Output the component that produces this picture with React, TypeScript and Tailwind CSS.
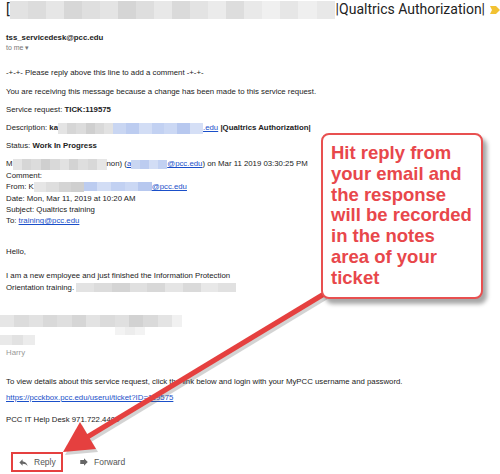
import React from "react";

// pixelated "redaction" strip: equal cells, each with its own shade
function Mosaic({ cells, className = "" }: { cells: string[]; className?: string }) {
  return (
    <span className={"inline-flex align-middle " + className}>
      {cells.map((c, i) => (
        <span key={i} className="h-full flex-1" style={{ background: c }} />
      ))}
    </span>
  );
}

const G1 = ["#e4e4e4", "#d6d6d6", "#dcdcdc", "#cfcfcf", "#d9d9d9", "#e2e2e2", "#d3d3d3", "#dedede", "#d8d8d8", "#e6e6e6"];
const BL = ["#c9d6f2", "#bcccf0", "#d2ddf5", "#c2d1f2", "#cbd8f4", "#b7c8ef", "#d5dff6"];

function ReplyIcon() {
  return (
    <svg viewBox="0 0 24 24" className="h-[11px] w-[11px]" fill="#666">
      <path d="M10 9V5l-7 7 7 7v-4.1c5 0 8.5 1.6 11 5.1-1-5-4-10-11-11z" />
    </svg>
  );
}

function ForwardIcon() {
  return (
    <svg viewBox="0 0 24 24" className="h-[10px] w-[10px]" fill="#666">
      <path d="M12 7V3l9 9-9 9v-4H3V7z" />
    </svg>
  );
}

const A = "text-[#1a4fc9] underline";

export default function App() {
  return (
    <div className="relative h-[474px] w-[500px] overflow-hidden bg-white font-['Liberation_Sans',Arial,sans-serif] text-[7.8px] leading-[11.4px] text-[#222]">
      {/* subject line */}
      <div className="flex h-[18px] items-center pl-[6px] pt-[2px] font-['Roboto',Arial,sans-serif] text-[14px] text-[#222]">
        <span>[</span>
        <Mosaic
          className="h-[18px] w-[326px]"
          cells={["#e2e2e2", "#dcdcdc", "#e6e6e6", "#d7d7d7", "#dfdfdf", "#e4e4e4", "#d5d5d5", "#dedede", "#e8e8e8", "#dadada", "#e3e3e3", "#ebebeb", "#dddddd", "#e9e9e9", "#f0f0f0", "#e6e6e6", "#efefef", "#e8e8e8"]}
        />
        <span className="ml-[1px] whitespace-nowrap">|Qualtrics Authorization|</span>
        <svg viewBox="0 0 10 8" className="ml-[5px] h-[8px] w-[10px]">
          <polygon points="0,0 6,0 10,4 6,8 0,8 2,4" fill="#f2c233" />
        </svg>
      </div>

      <div className="px-[6px]">
        <div className="mt-[14px] font-bold">tss_servicedesk@pcc.edu</div>
        <div className="text-[7px] leading-[10px] text-[#777]">to me ▾</div>

        <div className="mt-[14px]">-+-+- Please reply above this line to add a comment -+-+-</div>
        <div className="mt-[7.6px]">You are receiving this message because a change has been made to this service request.</div>
        <div className="mt-[6.6px]">
          Service request: <b>TICK:119575</b>
        </div>
        <div className="mt-[6.6px] flex items-center whitespace-nowrap">
          Description:&nbsp;<b>ka</b>
          <Mosaic className="h-[11px] w-[55px]" cells={G1.slice(0, 6)} />
          <Mosaic className="h-[11px] w-[90px]" cells={BL} />
          <span className={A}>.edu</span>
          <b>&nbsp;|Qualtrics Authorization|</b>
        </div>
        <div className="mt-[6.6px]">
          Status: <b>Work In Progress</b>
        </div>

        <div className="mt-[6.6px]">
          <div className="flex items-center whitespace-nowrap">
            M
            <Mosaic className="h-[11px] w-[94px]" cells={G1} />
            non) (<span className={A}>a</span>
            <Mosaic className="h-[9px] w-[36px]" cells={BL.slice(0, 4)} />
            <span className={A}>@pcc.edu</span>) on Mar 11 2019 03:30:25 PM
          </div>
          <div>Comment:</div>
          <div className="flex items-center whitespace-nowrap">
            From: K
            <Mosaic className="h-[10px] w-[50px]" cells={["#e6e6e6", "#dedede", "#d4d4d4", "#cfcfcf"]} />
            <Mosaic className="h-[9px] w-[68px]" cells={BL.slice(1, 6)} />
            <span className={A}>@pcc.edu</span>
          </div>
          <div>Date: Mon, Mar 11, 2019 at 10:20 AM</div>
          <div>Subject: Qualtrics training</div>
          <div>
            To: <span className={A}>training@pcc.edu</span>
          </div>
        </div>

        <div className="mt-[19.6px]">Hello,</div>
        <div className="mt-[12.6px]">
          <div>I am a new employee and just finished the Information Protection</div>
          <div className="flex items-center whitespace-nowrap">
            Orientation training.&nbsp;
            <Mosaic className="h-[9px] w-[160px]" cells={["#e3e3e3", "#dcdcdc", "#d4d4d4", "#e0e0e0", "#d8d8d8", "#e5e5e5", "#dadada", "#e8e8e8", "#e1e1e1"]} />
          </div>
        </div>
      </div>

      <div className="mt-[22px] flex">
        <Mosaic className="h-[12px] w-[172px]" cells={["#e6e6e6", "#dcdcdc", "#e2e2e2", "#d9d9d9", "#dfdfdf", "#d6d6d6", "#e3e3e3", "#dbdbdb", "#e0e0e0", "#d2d2d2", "#dadada", "#e4e4e4"]} />
        <Mosaic className="h-[12px] w-[10px]" cells={["#f1f1f1"]} />
      </div>
      <div className="flex h-[8px]">
        <Mosaic className="ml-[115px] h-[8px] w-[30px]" cells={["#f3f3f3", "#ededed", "#f3f3f3"]} />
      </div>
      <div className="flex">
        <Mosaic className="h-[10px] w-[35px]" cells={["#e9e9e9", "#e2e2e2", "#ececec"]} />
      </div>
      <div className="mt-[2px] px-[6px] text-[#999]">Harry</div>

      <div className="px-[6px]">
        <div className="mt-[17px]">To view details about this service request, click the link below and login with your MyPCC username and password.</div>
        <div className="mt-[5px]">
          <span className={A}>https://pcckbox.pcc.edu/userui/ticket?ID=119575</span>
        </div>
        <div className="mt-[10.6px]">PCC IT Help Desk 971.722.4400</div>
      </div>

      {/* reply / forward */}
      <div className="mt-[27px] flex items-center pl-[11px] text-[8.5px] text-[#555]">
        <div className="flex h-[20px] w-[52px] items-center gap-[5px] border-2 border-[#e5403f] pl-[5px]">
          <ReplyIcon />
          <span>Reply</span>
        </div>
        <div className="ml-[16px] flex items-center gap-[5px]">
          <ForwardIcon />
          <span>Forward</span>
        </div>
      </div>

      {/* annotation arrow */}
      <svg className="pointer-events-none absolute left-0 top-0" width="500" height="474" viewBox="0 0 500 474">
        <g opacity="0.25" transform="translate(2 3)">
          <line x1="324" y1="294" x2="84" y2="439" stroke="#555" strokeWidth="5" />
          <polygon points="63,452 80,422 96,449" fill="#555" />
        </g>
        <line x1="324" y1="294" x2="84" y2="439" stroke="#e5403f" strokeWidth="5" />
        <polygon points="63,452 80,422 96,449" fill="#e5403f" />
      </svg>

      {/* callout */}
      <div className="absolute left-[321px] top-[133px] h-[166px] w-[162px] rounded-[8px] border-2 border-[#e85050] bg-white pl-[8px] pt-[8px] shadow-[4px_5px_4px_rgba(0,0,0,0.35)]">
        <div className="whitespace-nowrap text-[18.5px] font-bold leading-[20.8px] text-[#e8474b]">
          Hit reply from
          <br />
          your email and
          <br />
          the response
          <br />
          will be recorded
          <br />
          in the notes
          <br />
          area of your
          <br />
          ticket
        </div>
      </div>
    </div>
  );
}
